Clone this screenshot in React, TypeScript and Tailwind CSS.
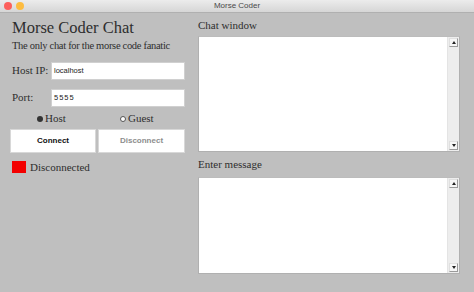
import React from "react";

const serif = { fontFamily: '"Liberation Serif", "Times New Roman", serif' };
const sans = { fontFamily: '"Liberation Sans", Arial, sans-serif' };

function ScrollArrow({ up }: { up: boolean }) {
  return (
    <div className="w-[9px] h-[9px] bg-[#f6f6f6] border border-[#9a9a9a] border-l-[#e0e0e0] border-t-[#e0e0e0] flex items-center justify-center">
      <svg width="4" height="3" viewBox="0 0 4 3">
        {up ? <polygon points="2,0 4,3 0,3" fill="#222" /> : <polygon points="0,0 4,0 2,3" fill="#222" />}
      </svg>
    </div>
  );
}

function TextArea({ h }: { h: string }) {
  return (
    <div className={`flex ${h} bg-white border border-[#b0b0b0] border-t-[#bcbcbc]`}>
      <div className="flex-1" />
      <div className="w-[12px] bg-[#ededed] border-l border-[#e4e4e4] flex flex-col justify-between items-center py-[1px]">
        <ScrollArrow up />
        <ScrollArrow up={false} />
      </div>
    </div>
  );
}

export default function App() {
  return (
    <div className="w-[474px] h-[292px] bg-[#bfbfbf] flex flex-col overflow-hidden">
      {/* title bar */}
      <div className="h-[13px] bg-gradient-to-b from-[#ececec] to-[#d6d6d6] border-b border-[#b0b0b0] flex items-center relative">
        <div className="flex gap-[4px] pl-[4px]">
          <div className="w-[8px] h-[8px] rounded-full bg-[#fc605c]" />
          <div className="w-[8px] h-[8px] rounded-full bg-[#fdbc40]" />
        </div>
        <div className="absolute inset-0 flex items-center justify-center text-[8px] text-[#4a4a4a]" style={sans}>
          Morse Coder
        </div>
      </div>
      <div className="flex flex-1">
        {/* left column */}
        <div className="w-[188px] pl-[10px] pr-[3px] flex flex-col text-[#2e2e2e]" style={serif}>
          <div className="mt-[6px] pl-[2px] text-[16.5px] leading-[18px] whitespace-nowrap">Morse Coder Chat</div>
          <div className="mt-[1.5px] pl-[2px] text-[10.5px] tracking-[-0.3px] leading-[13px] whitespace-nowrap">
            The only chat for the morse code fanatic
          </div>
          <div className="mt-[10px] flex h-[18px] items-center">
            <div className="w-[41px] pl-[2px] text-[11px] whitespace-nowrap">Host IP:</div>
            <div className="flex-1 h-full bg-white border border-[#d0d0d0] flex items-center pl-[2px] text-[7.5px] text-[#222]" style={sans}>
              localhost
            </div>
          </div>
          <div className="mt-[9px] flex h-[18px] items-center">
            <div className="w-[41px] pl-[2px] text-[11px]">Port:</div>
            <div className="flex-1 h-full bg-white border border-[#d0d0d0] flex items-center pl-[2px] text-[7.5px] tracking-[1px] text-[#222]" style={sans}>
              5555
            </div>
          </div>
          <div className="mt-[5.5px] h-[13px] flex items-center text-[11px]">
            <div className="w-[88px] flex items-center pl-[27px] gap-[2px]">
              <div className="w-[6px] h-[6px] rounded-full bg-[#333]" />
              <span>Host</span>
            </div>
            <div className="flex items-center pl-[22px] gap-[2px]">
              <div className="w-[6px] h-[6px] rounded-full bg-white border border-[#555]" />
              <span>Guest</span>
            </div>
          </div>
          <div className="mt-[4px] flex gap-[2px] h-[24px]" style={sans}>
            <div className="w-[86px] bg-white border border-[#d8d8d8] flex items-center justify-center text-[8px] font-bold text-[#111]">
              Connect
            </div>
            <div className="flex-1 bg-white border border-[#d8d8d8] flex items-center justify-center text-[8px] font-bold text-[#8d8d8d]">
              Disconnect
            </div>
          </div>
          <div className="mt-[8px] flex items-center gap-[4px] pl-[2px]">
            <div className="w-[14px] h-[12px] bg-[#f30000]" />
            <span className="text-[11px] leading-[12px]">Disconnected</span>
          </div>
        </div>
        {/* right column */}
        <div className="w-[262px] ml-[10px] flex flex-col text-[#2e2e2e]" style={serif}>
          <div className="mt-[5.5px] text-[11px] leading-[13px]">Chat window</div>
          <div className="mt-[4px]">
            <TextArea h="h-[116px]" />
          </div>
          <div className="mt-[6.5px] text-[11px] leading-[13px]">Enter message</div>
          <div className="mt-[5.5px]">
            <TextArea h="h-[97px]" />
          </div>
        </div>
      </div>
    </div>
  );
}
